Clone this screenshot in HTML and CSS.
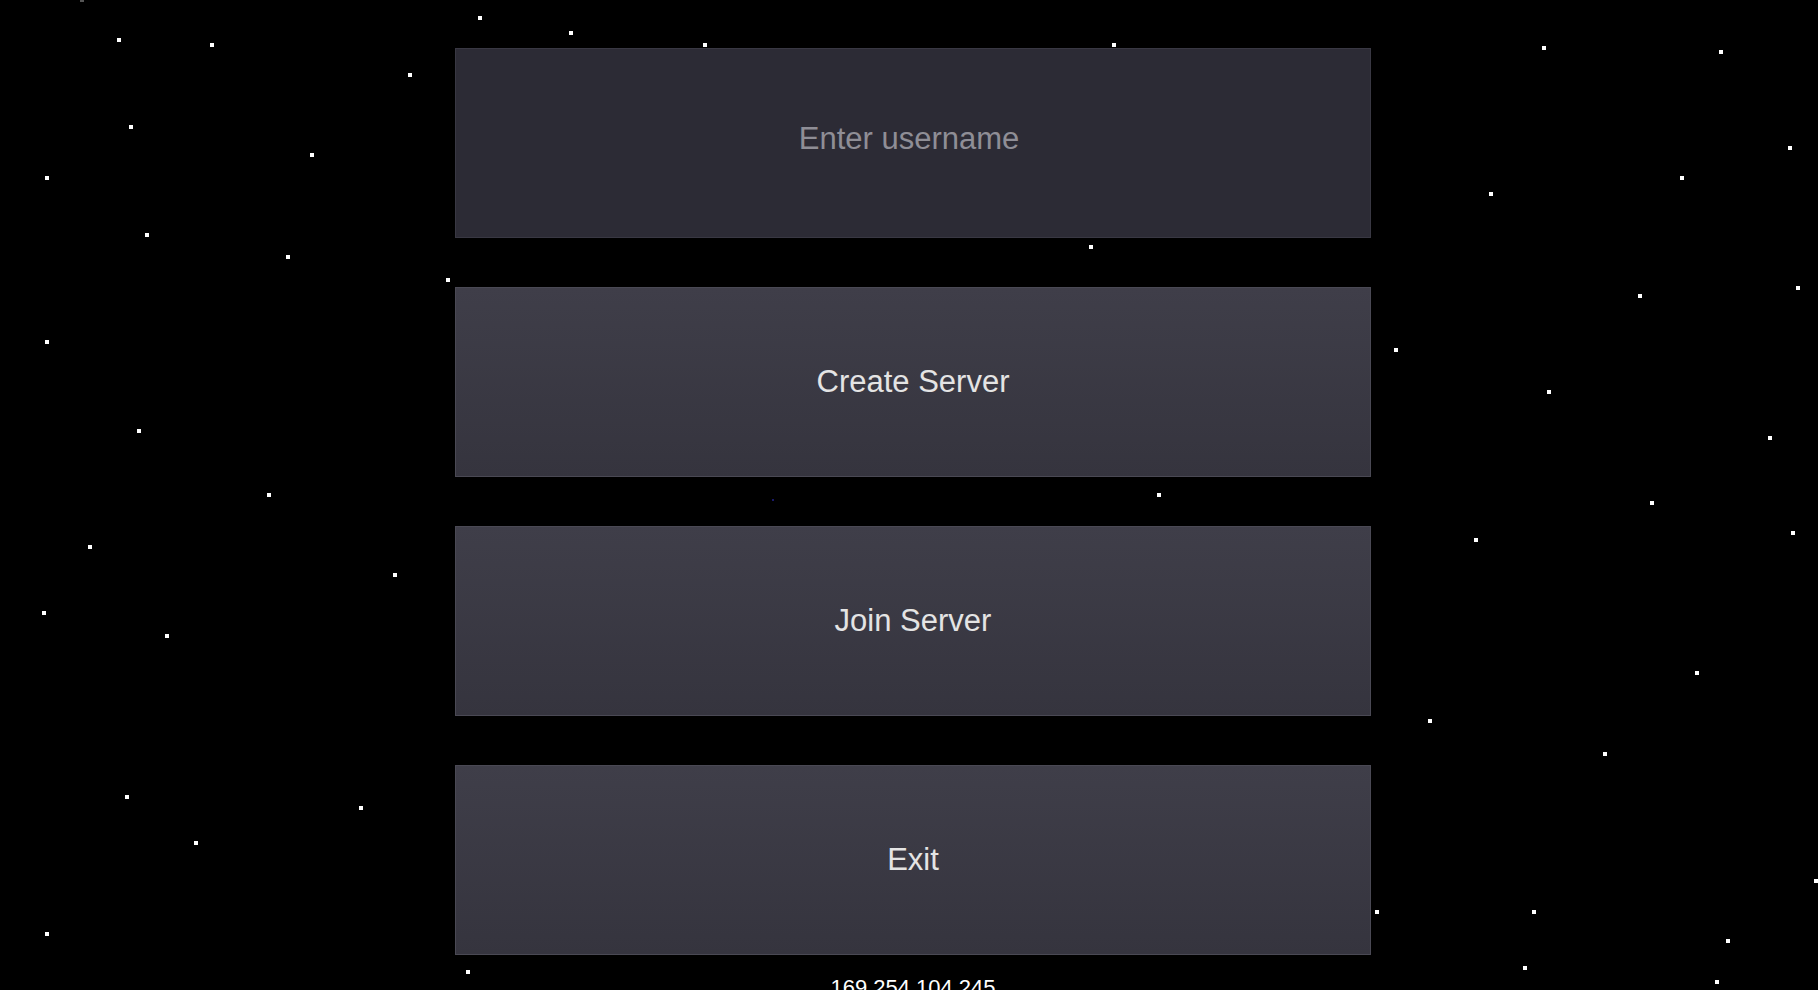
FILE: index.html
```html
<!DOCTYPE html>
<html lang="en">
<head>
<meta charset="utf-8">
<title>Main Menu</title>
<link rel="stylesheet" href="styles.css">
</head>
<body>
<div class="sky"><div class="stars"></div><div class="star-blue"></div></div>
<main class="menu">
  <input class="field" type="text" placeholder="Enter username">
  <button class="btn">Create Server</button>
  <button class="btn">Join Server</button>
  <button class="btn">Exit</button>
  <div class="ip">169.254.104.245</div>
</main>
</body>
</html>
```
FILE: styles.css
```css
html, body {
  margin: 0;
  padding: 0;
  width: 100%;
  height: 100%;
  background: #000;
  overflow: hidden;
  font-family: "Liberation Sans", Arial, sans-serif;
}

.sky {
  position: absolute;
  inset: 0;
  pointer-events: none;
}

.stars {
  position: absolute;
  left: 0;
  top: 0;
  width: 4px;
  height: 4px;
  background: transparent;
  box-shadow:
    478px 16px 0 #fff, 569px 31px 0 #fff, 703px 43px 0 #fff, 1112px 43px 0 #fff,
    117px 38px 0 #fff, 210px 43px 0 #fff, 408px 73px 0 #fff, 129px 125px 0 #fff,
    310px 153px 0 #fff, 45px 176px 0 #fff, 145px 233px 0 #fff, 286px 255px 0 #fff,
    446px 278px 0 #fff, 1089px 245px 0 #fff, 45px 340px 0 #fff, 137px 429px 0 #fff,
    267px 493px 0 #fff, 88px 545px 0 #fff, 393px 573px 0 #fff, 42px 611px 0 #fff,
    165px 634px 0 #fff, 1157px 493px 0 #fff, 1394px 348px 0 #fff, 1542px 46px 0 #fff,
    1719px 50px 0 #fff, 1788px 146px 0 #fff, 1680px 176px 0 #fff, 1489px 192px 0 #fff,
    1638px 294px 0 #fff, 1796px 286px 0 #fff, 1547px 390px 0 #fff, 1768px 436px 0 #fff,
    1650px 501px 0 #fff, 1791px 531px 0 #fff, 1474px 538px 0 #fff, 1695px 671px 0 #fff,
    1428px 719px 0 #fff, 1603px 752px 0 #fff, 125px 795px 0 #fff, 359px 806px 0 #fff,
    194px 841px 0 #fff, 45px 932px 0 #fff, 466px 970px 0 #fff, 1375px 910px 0 #fff,
    1532px 910px 0 #fff, 1814px 879px 0 #fff, 1726px 939px 0 #fff, 1523px 966px 0 #fff,
    1715px 980px 0 #fff, 80px -2px 0 #555;
}

.star-blue {
  position: absolute;
  left: 772px;
  top: 499px;
  width: 2px;
  height: 2px;
  background: #1a1a6a;
}

.menu {
  position: relative;
  box-sizing: border-box;
  height: 100%;
  padding: 48px 0 0 8px;
  display: flex;
  flex-direction: column;
  align-items: center;
  gap: 49px;
}

.field,
.btn {
  box-sizing: border-box;
  width: 916px;
  height: 190px;
  flex: none;
  margin: 0;
  font-family: "Liberation Sans", Arial, sans-serif;
  font-size: 31px;
  outline: none;
}

.field {
  background: #2c2b35;
  border: 1px solid #393843;
  color: #e6e6e6;
  text-align: center;
  padding: 0 8px 8px 0;
}

.field::placeholder {
  color: #8f8e96;
  opacity: 1;
}

.btn {
  background: linear-gradient(180deg, #3f3e49 0%, #35343e 100%);
  border: 1px solid #4a4954;
  color: #e4e4e4;
  padding: 0;
  cursor: pointer;
}

.ip {
  margin-top: -27px;
  color: #fff;
  font-size: 22px;
  line-height: 22px;
}
```
